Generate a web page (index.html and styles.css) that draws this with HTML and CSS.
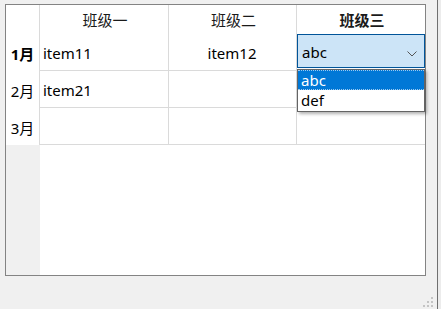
FILE: index.html
```html
<!DOCTYPE html>
<html lang="zh">
<head>
<meta charset="utf-8">
<title>Table</title>
<link rel="stylesheet" href="styles.css">
</head>
<body>
<div class="screen">
  <div class="main">
    <div class="frame">
      <div class="grid">
        <div class="corner"></div>
        <div class="hcell">班级一</div>
        <div class="hcell">班级二</div>
        <div class="hcell last bold">班级三</div>

        <div class="vcell bold">1月</div>
        <div class="cell left">item11</div>
        <div class="cell center">item12</div>
        <div class="cell last editor">
          <div class="combo">
            <span class="combo-text">abc</span>
            <svg class="chev" width="10" height="6" viewBox="0 0 10 6"><path d="M0.5 0.5 L5 5 L9.5 0.5" fill="none" stroke="#555" stroke-width="1"/></svg>
          </div>
          <div class="popup">
            <div class="opt sel">abc</div>
            <div class="opt">def</div>
          </div>
        </div>

        <div class="vcell">2月</div>
        <div class="cell left">item21</div>
        <div class="cell"></div>
        <div class="cell last"></div>

        <div class="vcell">3月</div>
        <div class="cell"></div>
        <div class="cell"></div>
        <div class="cell last"></div>

        <div class="fill-left"></div>
        <div class="fill"></div>
      </div>
    </div>
    <div class="bottom">
      <svg class="grip" width="11" height="11" viewBox="0 0 11 11">
        <rect x="8" y="0" width="2" height="2" fill="#c4c4c4"/>
        <rect x="4" y="4" width="2" height="2" fill="#c4c4c4"/>
        <rect x="8" y="4" width="2" height="2" fill="#c4c4c4"/>
        <rect x="0" y="8" width="2" height="2" fill="#c4c4c4"/>
        <rect x="4" y="8" width="2" height="2" fill="#c4c4c4"/>
        <rect x="8" y="8" width="2" height="2" fill="#c4c4c4"/>
      </svg>
    </div>
  </div>
  <div class="vline"></div>
  <div class="rest"></div>
</div>
</body>
</html>
```

FILE: styles.css
```css
* { box-sizing: border-box; }

html, body {
  margin: 0;
  padding: 0;
  background: #f0f0f0;
}

body {
  font-family: "Noto Sans", "Noto Sans CJK SC", sans-serif;
  font-size: 15px;
  color: #000;
}

.screen {
  display: flex;
  width: 441px;
  height: 309px;
  overflow: hidden;
}

.main {
  width: 437px;
  height: 309px;
  display: flex;
  flex-direction: column;
}

.vline {
  width: 1px;
  height: 309px;
  background: #6f6f6f;
}

.rest {
  flex: 1;
  background: #ececec;
}

.frame {
  margin: 4px 0 0 5px;
  width: 421px;
  height: 272px;
  border: 1px solid #838383;
  background: #fff;
}

.grid {
  display: grid;
  grid-template-columns: 34px 129px 128px 128px;
  grid-template-rows: 29px 37px 37px 37px 1fr;
  height: 100%;
}

.corner {
  background: #fff;
  border-right: 1px solid #dadada;
}

.hcell {
  display: flex;
  align-items: center;
  justify-content: center;
  font-family: "Noto Sans CJK SC", sans-serif;
  font-size: 15px;
  color: #1a1a1a;
  border-right: 1px solid #dadada;
  padding-left: 2px;
  line-height: 1;
}

.hcell.last { border-right: none; }

.bold { font-weight: bold; }

.vcell {
  display: flex;
  align-items: center;
  justify-content: center;
  background: #fff;
  border-right: 1px solid #dadada;
  font-family: "Noto Sans", "Noto Sans CJK SC", sans-serif;
  font-size: 15px;
  padding-top: 3px;
  line-height: 1;
}

.cell {
  display: flex;
  align-items: center;
  border-right: 1px solid #dadada;
  border-bottom: 1px solid #dadada;
  padding-top: 2px;
  line-height: 1;
}

.cell.last { border-right: none; }

.cell.left { padding-left: 3px; }
.cell.center { justify-content: center; padding-right: 1px; }

.editor {
  position: relative;
  align-items: flex-start;
  padding-top: 0;
}

.combo {
  width: 128px;
  height: 34px;
  background: #cce4f7;
  border: 1px solid #005499;
  display: flex;
  align-items: center;
  justify-content: space-between;
  padding: 2px 7px 0 4px;
}

.combo-text { line-height: 1; }

.chev { display: block; margin-top: 3px; }

.popup {
  position: absolute;
  top: 35px;
  left: 0;
  width: 128px;
  height: 43px;
  background: #fff;
  border: 1px solid #646464;
  box-shadow: 2px 2px 3px rgba(0, 0, 0, 0.3);
  z-index: 2;
}

.opt {
  height: 20px;
  padding-left: 3px;
  line-height: 20px;
}

.opt.sel {
  background: #0078d7;
  color: #fff;
  border-top: 1px dotted #9ccaf0;
  border-bottom: 1px dotted #9ccaf0;
  line-height: 18px;
}

.opt + .opt { height: 21px; line-height: 21px; }

.fill-left {
  background: #f0f0f0;
}

.fill {
  grid-column: span 3;
  background: #fff;
}

.bottom {
  flex: 1;
  display: flex;
  align-items: flex-end;
  justify-content: flex-end;
  padding: 0 3px 1px 0;
}

.grip { display: block; }
```
